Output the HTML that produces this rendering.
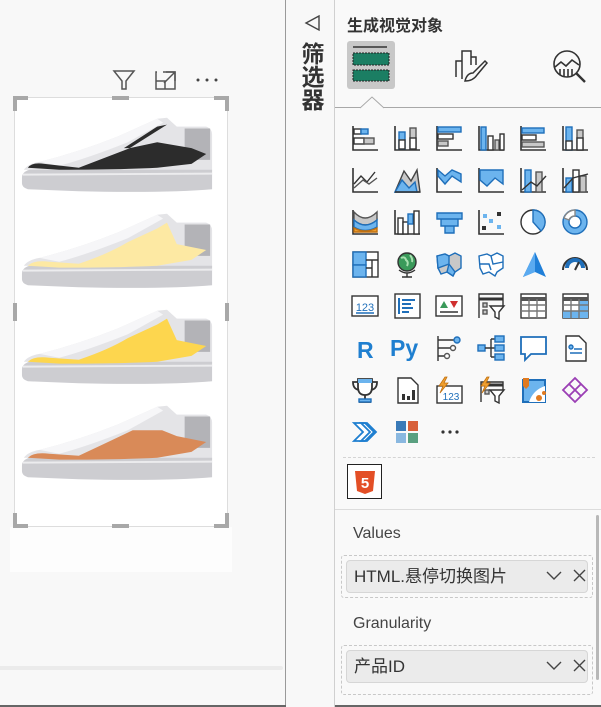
<!DOCTYPE html>
<html><head><meta charset="utf-8">
<style>
*{margin:0;padding:0;box-sizing:border-box}
body{width:601px;height:707px;overflow:hidden;background:#f8f8f8;font-family:"Liberation Sans","Noto Sans CJK SC",sans-serif;position:relative}
.a{position:absolute}
.fld{position:absolute;left:341px;width:252px;border:1px dashed #c8c8c8;border-radius:3px}
.pill{position:absolute;left:4px;right:4px;top:4px;height:33px;background:#ebebeb;border:1px solid #d6d6d6;border-radius:4px;font-size:17px;color:#333;line-height:31px;padding-left:7px}
.lbl{position:absolute;left:353px;font-size:16px;color:#444}
</style></head><body>
<div class="a" style="left:0;top:0;width:285px;height:707px;background:#f8f8f8"></div>
<div class="a" style="left:0;top:666px;width:283px;height:4px;background:#ebebeb;border-radius:0 2px 2px 0"></div>
<div class="a" style="left:285px;top:0;width:1px;height:707px;background:#9a9a9a"></div>
<div class="a" style="left:0;top:705px;width:601px;height:2px;background:#666"></div>
<svg class="a" style="left:110px;top:68px" width="110" height="24" viewBox="0 0 110 24">
<path d="M4 3H24L16 13V21H12V13Z" fill="none" stroke="#555" stroke-width="1.5"/>
<rect x="46" y="4" width="19" height="17" fill="none" stroke="#555" stroke-width="1.5"/>
<path d="M46 13H55V21" fill="none" stroke="#555" stroke-width="1.5"/>
<path d="M56 4h9v9M54 15L65 4" stroke="#555" stroke-width="1.5" fill="none"/>
<rect x="47" y="3" width="6" height="3" fill="#f8f8f8"/>
<circle cx="88" cy="12" r="1.5" fill="#444"/><circle cx="97" cy="12" r="1.5" fill="#444"/><circle cx="106" cy="12" r="1.5" fill="#444"/>
</svg>
<div class="a" style="left:14px;top:97px;width:214px;height:430px;background:#fff;border:1px solid #ddd"></div>
<div class="a" style="left:10px;top:527px;width:222px;height:45px;background:#fdfdfd"></div>
<svg class="a" style="left:12px;top:95px" width="218" height="434" viewBox="0 0 218 434">
<g fill="#a8a8a8">
<path d="M1 1h15v4H5v11H1z"/><path d="M217 1h-15v4h11v11h4z"/>
<path d="M1 433h15v-4H5v-11H1z"/><path d="M217 433h-15v-4h11v-11h4z"/>
<rect x="100" y="1" width="17" height="4"/><rect x="100" y="429" width="17" height="4"/>
<rect x="1" y="208" width="4" height="18"/><rect x="213" y="208" width="4" height="18"/>
</g></svg>
<svg width="0" height="0" class="a"><defs>
<g id="shoe">
<path d="M4 56 Q8 50 20 48 Q60 38 100 22 L140 4 L150 3 L160 12 L190 12 Q196 14 196 20 L196 58 Z" fill="#e4e4e7"/>
<path d="M20 48 Q60 38 100 22 L140 4 L146 8 L110 28 Q70 44 40 52Z" fill="#f6f6f8"/>
<path d="M168 14h26v32h-26z" fill="#b3b3b7"/>
<path d="M2 64 Q2 58 10 56 L196 56 L196 76 Q150 80 60 78 L8 76 Q2 74 2 70Z" fill="#cdcdd1"/>
<path d="M3 61 L196 60" stroke="#ececee" stroke-width="2"/>
</g></defs></svg>
<svg class="a" style="left:20px;top:114px" width="196" height="82" viewBox="0 0 200 82"><use href="#shoe"/>
<path d="M8 54 Q12 48 25 50 L60 54 L112 34 L140 28 L175 34 L190 40 L175 50 L140 54 Q100 56 40 56 Z" fill="#2c2c2c"/>
<path d="M140 12 L150 10 L112 34 L106 34 Z" fill="#2c2c2c"/></svg>
<svg class="a" style="left:20px;top:210px" width="196" height="82" viewBox="0 0 200 82"><use href="#shoe"/>
<path d="M8 56 Q14 50 30 52 L60 54 Q90 44 110 32 L140 18 L150 12 L160 34 L190 40 L175 50 L140 56 Q100 58 40 58 Z" fill="#fde9a3"/></svg>
<svg class="a" style="left:20px;top:306px" width="196" height="82" viewBox="0 0 200 82"><use href="#shoe"/>
<path d="M8 56 Q14 50 30 52 L60 54 Q90 44 110 32 L140 18 L150 12 L160 34 L190 40 L175 50 L140 56 Q100 58 40 58 Z" fill="#fdd64e"/></svg>
<svg class="a" style="left:20px;top:402px" width="196" height="82" viewBox="0 0 200 82"><use href="#shoe"/>
<path d="M8 56 Q14 50 30 52 L60 54 Q90 40 115 28 L145 28 L160 34 L190 40 L175 50 L140 56 Q100 58 40 58 Z" fill="#d98a58"/></svg>

<div class="a" style="left:286px;top:0;width:48px;height:707px;background:#f8f8f8"></div>
<svg class="a" style="left:303px;top:14px" width="18" height="20" viewBox="0 0 18 20"><path d="M16 2 L3 9 L16 16 Z" fill="none" stroke="#444" stroke-width="1.4"/></svg>
<div class="a" style="left:298px;top:42px;width:26px;font-size:23px;font-weight:bold;color:#333;line-height:26px;writing-mode:vertical-rl">筛选器</div>
<div class="a" style="left:334px;top:0;width:1px;height:707px;background:#d0d0d0"></div>
<div class="a" style="left:335px;top:0;width:266px;height:705px;background:#f9f9f9"></div>
<div class="a" style="left:347px;top:12px;font-size:16px;font-weight:bold;color:#333">生成视觉对象</div>
<div class="a" style="left:347px;top:41px;width:48px;height:48px;background:#c8c8c8;border-radius:3px"></div>
<svg class="a" style="left:347px;top:41px" width="48" height="48" viewBox="0 0 48 48">
<path d="M6 6H40" stroke="#333" stroke-width="1.4"/>
<rect x="6" y="12" width="36" height="12" fill="#1b7e63" stroke="#222" stroke-dasharray="2 1"/>
<rect x="6" y="29" width="36" height="11" fill="#1b7e63" stroke="#222" stroke-dasharray="2 1"/></svg>
<svg class="a" style="left:453px;top:47px" width="36" height="36" viewBox="0 0 36 36" fill="none" stroke="#333" stroke-width="1.5">
<path d="M3 30V14H9V32M9 22V4H18V18M18 10H23V18"/><path d="M12 34 Q14 26 20 26 L32 14 L34 16 L24 28 Q20 34 12 34Z"/></svg>
<svg class="a" style="left:550px;top:47px" width="38" height="38" viewBox="0 0 38 38" fill="none" stroke="#333" stroke-width="1.6">
<circle cx="17" cy="17" r="13"/><path d="M26 26L35 35" stroke-width="2.4"/><path d="M5 20 L11 15 L16 19 L22 13 L29 18"/><path d="M10 22V28M14 22V30M18 22V30M22 22V29"/></svg>
<div class="a" style="left:335px;top:107px;width:266px;height:1px;background:#a8a8a8"></div>
<svg class="a" style="left:360px;top:96px" width="24" height="13" viewBox="0 0 24 13"><path d="M0 12 L12 1 L24 12" fill="#f9f9f9" stroke="#a8a8a8"/></svg>

<svg class="a" style="left:345px;top:118px" width="250" height="330" viewBox="0 0 250 330" fill="none" stroke-width="1.4">
<defs>
<g id="ax"><path d="M2 2V26H27" stroke="#333" stroke-width="1.6"/></g>
</defs>
<g transform="translate(6,6)"><use href="#ax"/><rect x="3" y="5" width="7" height="5" fill="#fff" stroke="#333"/><rect x="10" y="5" width="7" height="5" fill="#6cb4ee" stroke="#1f6fba"/><rect x="3" y="14" width="10" height="6" fill="#fff" stroke="#333"/><rect x="13" y="14" width="10" height="6" fill="#c8c8c8" stroke="#555"/></g>
<g transform="translate(48,6)"><use href="#ax"/><rect x="6" y="8" width="6" height="17" fill="#6cb4ee" stroke="#1f6fba"/><rect x="6" y="16" width="6" height="9" fill="#fff" stroke="#333"/><rect x="17" y="4" width="6" height="21" fill="#c8c8c8" stroke="#555"/><rect x="17" y="14" width="6" height="11" fill="#fff" stroke="#333"/></g>
<g transform="translate(90,6)"><use href="#ax"/><rect x="3" y="3" width="23" height="5" fill="#6cb4ee" stroke="#1f6fba"/><rect x="3" y="10" width="15" height="5" fill="#fff" stroke="#333"/><rect x="3" y="17" width="10" height="5" fill="#c8c8c8" stroke="#555"/></g>
<g transform="translate(132,6)"><use href="#ax"/><rect x="4" y="3" width="5" height="23" fill="#6cb4ee" stroke="#1f6fba"/><rect x="11" y="12" width="5" height="14" fill="#fff" stroke="#333"/><rect x="18" y="16" width="4" height="10" fill="#c8c8c8" stroke="#555"/><rect x="23" y="10" width="4" height="16" fill="#fff" stroke="#333"/></g>
<g transform="translate(174,6)"><use href="#ax"/><rect x="3" y="4" width="22" height="5" fill="#6cb4ee" stroke="#1f6fba"/><rect x="3" y="11" width="14" height="5" fill="#fff" stroke="#333"/><rect x="3" y="18" width="22" height="5" fill="#c8c8c8" stroke="#555"/></g>
<g transform="translate(216,6)"><use href="#ax"/><rect x="5" y="3" width="6" height="23" fill="#6cb4ee" stroke="#1f6fba"/><rect x="5" y="17" width="6" height="9" fill="#fff" stroke="#333"/><rect x="16" y="6" width="6" height="20" fill="#c8c8c8" stroke="#555"/><rect x="16" y="14" width="6" height="12" fill="#fff" stroke="#333"/></g>
<g transform="translate(6,48)"><use href="#ax"/><path d="M3 18 L10 10 L16 16 L24 6" stroke="#333"/><path d="M3 22 L12 14 L18 18 L26 12" stroke="#555"/></g>
<g transform="translate(48,48)"><path d="M2 26 L11 5 L18 15 L24 4 L27 26 Z" fill="#c8c8c8" stroke="#444"/><path d="M2 26 L9 14 L16 22 L22 16 L24 26 Z" fill="#6cb4ee" stroke="#1f6fba"/><path d="M2 26H27" stroke="#333" stroke-width="1.6"/></g>
<g transform="translate(90,48)"><use href="#ax"/><path d="M3 10 L10 18 L17 10 L26 16 L26 8 L17 4 L10 10 L3 4Z" fill="#6cb4ee" stroke="#1f6fba"/></g>
<g transform="translate(132,48)"><use href="#ax"/><path d="M3 4 L26 4 L26 18 L18 12 L10 20 L3 14Z" fill="#6cb4ee" stroke="#1f6fba"/></g>
<g transform="translate(174,48)"><use href="#ax"/><rect x="6" y="4" width="6" height="22" fill="#6cb4ee" stroke="#1f6fba"/><rect x="17" y="6" width="6" height="20" fill="#c8c8c8" stroke="#555"/><path d="M3 24 L12 16 L18 20 L27 10" stroke="#333"/></g>
<g transform="translate(216,48)"><use href="#ax"/><rect x="5" y="12" width="6" height="14" fill="#6cb4ee" stroke="#1f6fba"/><rect x="12" y="4" width="6" height="22" fill="#fff" stroke="#333"/><rect x="19" y="10" width="6" height="16" fill="#c8c8c8" stroke="#555"/><path d="M3 22 L12 12 L27 8" stroke="#333"/></g>
<g transform="translate(6,90)"><use href="#ax"/><path d="M3 4 Q14 16 26 4 L26 12 Q14 22 3 12Z" fill="#c8c8c8" stroke="#555"/><path d="M3 12 Q14 22 26 12 L26 19 Q14 26 3 19Z" fill="#6cb4ee" stroke="#1f6fba"/><path d="M3 20 Q14 26 26 20 L26 24 L3 24Z" fill="#f0a030" stroke="#c07010"/></g>
<g transform="translate(48,90)"><use href="#ax"/><rect x="5" y="10" width="5" height="16" fill="#fff" stroke="#333"/><rect x="10" y="14" width="5" height="12" fill="#fff" stroke="#333"/><rect x="15" y="6" width="5" height="10" fill="#6cb4ee" stroke="#1f6fba"/><rect x="21" y="3" width="5" height="23" fill="#fff" stroke="#333"/></g>
<g transform="translate(90,90)"><path d="M2 5H27V11H2Z M6 11H23V18H6Z M10 18H19V25H10Z" fill="#6cb4ee" stroke="#1f6fba"/></g>
<g transform="translate(132,90)"><use href="#ax"/><rect x="6" y="6" width="4" height="4" fill="#6cb4ee" stroke="none"/><rect x="12" y="11" width="4" height="4" fill="#6cb4ee" stroke="none"/><rect x="20" y="4" width="4" height="4" fill="#333" stroke="none"/><rect x="5" y="18" width="4" height="4" fill="#333" stroke="none"/><rect x="20" y="17" width="4" height="4" fill="#6cb4ee" stroke="none"/></g>
<g transform="translate(174,90)"><circle cx="14" cy="14" r="12" fill="#fff" stroke="#333"/><path d="M14 2 A12 12 0 0 1 22 23 L14 14Z" fill="#6cb4ee" stroke="#1f6fba"/></g>
<g transform="translate(216,90)"><circle cx="14" cy="14" r="12" fill="#6cb4ee" stroke="#1f6fba"/><circle cx="14" cy="14" r="6" fill="#fff" stroke="#1f6fba"/><path d="M14 2 A12 12 0 0 0 3 10 L8 12 A6 6 0 0 1 14 8Z" fill="#fff" stroke="#888"/></g>
<g transform="translate(6,132)"><rect x="2" y="2" width="25" height="25" fill="#fff" stroke="#333"/><rect x="2" y="2" width="13" height="13" fill="#6cb4ee" stroke="#1f6fba"/><rect x="2" y="15" width="13" height="12" fill="#6cb4ee" stroke="#1f6fba"/><path d="M15 10H27M21 10V27M15 18H21" stroke="#333"/></g>
<g transform="translate(48,132)"><circle cx="14" cy="12" r="9" fill="#3a9a5a" stroke="#333"/><path d="M8 8 Q12 6 13 10 Q16 12 14 16 M17 5 Q20 9 19 12" stroke="#a8e0b0" stroke-width="2"/><path d="M6 20 Q14 26 22 20 M14 23V27M9 27H19" stroke="#333"/></g>
<g transform="translate(90,132)"><path d="M2 6 L10 4 L14 6 L20 3 L26 6 L26 18 L20 22 L18 26 L12 22 L6 24 L3 18Z" fill="#c8c8c8" stroke="#1f6fba"/><path d="M2 6 L10 4 L14 6 L14 14 L3 18Z M14 14 L20 22 L18 26 L12 22Z" fill="#6cb4ee" stroke="#1f6fba"/></g>
<g transform="translate(132,132)"><path d="M2 6 L10 4 L14 6 L20 3 L26 6 L26 18 L20 22 L18 26 L12 22 L6 24 L3 18Z" fill="#fff" stroke="#1f6fba"/><path d="M2 14 L12 14 L14 20 M14 6 L16 14 L26 12" stroke="#1f6fba"/></g>
<g transform="translate(174,132)"><path d="M16 2 L27 27 L16 22 L4 27Z" fill="#1f7fd8" stroke="none"/><path d="M16 2 L16 22 L4 27Z" fill="#5aaaf0"/></g>
<g transform="translate(216,132)"><path d="M2 20 A12 12 0 0 1 26 20" stroke="#333" stroke-width="2"/><path d="M6 18 A8 8 0 0 1 22 18" stroke="#1f6fba" stroke-width="4"/><path d="M14 20 L18 12" stroke="#333" stroke-width="2"/></g>
<g transform="translate(6,174)"><rect x="1" y="4" width="26" height="20" fill="#fff" stroke="#333"/><text x="14" y="19" font-size="11" fill="#1f6fba" text-anchor="middle" stroke="none" font-family="Liberation Sans">123</text><path d="M5 21H23" stroke="#1f6fba"/></g>
<g transform="translate(48,174)"><rect x="2" y="2" width="25" height="24" fill="#fff" stroke="#333"/><path d="M6 6V22M9 8H22M9 12H18M9 16H20M9 20H16" stroke="#1f6fba" stroke-width="2"/></g>
<g transform="translate(90,174)"><rect x="1" y="4" width="26" height="20" fill="#fff" stroke="#333"/><path d="M5 16 L9 9 L13 16Z" fill="#3a9a5a" stroke="none"/><path d="M15 9 L23 9 L19 16Z" fill="#d03030" stroke="none"/><path d="M5 20H23" stroke="#333"/></g>
<g transform="translate(132,174)"><path d="M2 26V2H26V14" stroke="#333"/><path d="M2 7H26" stroke="#333" stroke-width="3"/><rect x="6" y="11" width="4" height="4" fill="#c8c8c8" stroke="#555"/><rect x="6" y="18" width="4" height="4" fill="#c8c8c8" stroke="#555"/><path d="M13 14H27L22 20V27L18 25V20Z" fill="#fff" stroke="#333"/></g>
<g transform="translate(174,174)"><rect x="2" y="2" width="25" height="24" fill="#fff" stroke="#333"/><path d="M2 7H27" stroke="#555" stroke-width="4"/><path d="M2 13H27M2 19H27M10 7V26M18 7V26" stroke="#777"/></g>
<g transform="translate(216,174)"><rect x="2" y="2" width="25" height="24" fill="#fff" stroke="#333"/><path d="M2 7H27" stroke="#555" stroke-width="4"/><rect x="18" y="9" width="9" height="17" fill="#6cb4ee" stroke="none"/><rect x="2" y="19" width="25" height="7" fill="#6cb4ee" stroke="none"/><path d="M2 13H27M2 19H27M10 7V26M18 7V26" stroke="#777"/></g>
<text x="12" y="240" font-size="23" font-weight="bold" fill="#1f7fd0" stroke="none" font-family="Liberation Sans">R</text>
<text x="45" y="238" font-size="23" font-weight="bold" fill="#1f7fd0" stroke="none" font-family="Liberation Sans">Py</text>
<g transform="translate(90,216)"><path d="M3 2V27M3 6H20M3 14H16M3 22H10" stroke="#333"/><circle cx="22" cy="6" r="3" fill="#6cb4ee" stroke="#1f6fba"/><circle cx="18" cy="14" r="2.5" fill="#fff" stroke="#555"/><circle cx="12" cy="22" r="2.5" fill="#fff" stroke="#555"/></g>
<g transform="translate(132,216)"><rect x="1" y="11" width="7" height="6" fill="#6cb4ee" stroke="#1f6fba"/><path d="M8 14H14M14 5V23M14 5H18M14 14H18M14 23H18" stroke="#333"/><rect x="18" y="2" width="9" height="6" fill="#6cb4ee" stroke="#1f6fba"/><rect x="18" y="11" width="9" height="6" fill="#6cb4ee" stroke="#1f6fba"/><rect x="18" y="20" width="9" height="6" fill="#6cb4ee" stroke="#1f6fba"/></g>
<g transform="translate(174,216)"><path d="M2 3H27V20H12L6 26V20H2Z" fill="#fff" stroke="#1f6fba" stroke-width="1.8"/></g>
<g transform="translate(216,216)"><path d="M5 2H18L25 9V27H5Z" fill="#fff" stroke="#333"/><circle cx="10" cy="13" r="2" fill="#6cb4ee" stroke="#1f6fba"/><path d="M13 15H21M9 19H21" stroke="#1f6fba"/></g>
<g transform="translate(6,258)"><path d="M7 3H21V11Q21 19 14 19Q7 19 7 11Z" fill="#fff" stroke="#333" stroke-width="1.8"/><path d="M7 6H2Q2 13 8 14M21 6H26Q26 13 20 14M14 19V23M8 26H20" stroke="#333" stroke-width="1.8"/><rect x="8" y="23" width="12" height="3" fill="#6cb4ee" stroke="#1f6fba"/><rect x="7" y="3" width="14" height="4" fill="#6cb4ee" stroke="none"/></g>
<g transform="translate(48,258)"><path d="M5 2H18L25 9V27H5Z" fill="#fff" stroke="#333"/><rect x="9" y="18" width="3" height="6" fill="#333" stroke="none"/><rect x="14" y="20" width="3" height="4" fill="#333" stroke="none"/><rect x="19" y="14" width="3" height="10" fill="#333" stroke="none"/></g>
<g transform="translate(90,258)"><rect x="2" y="10" width="25" height="17" fill="#fff" stroke="#333"/><text x="16" y="24" font-size="10" fill="#1f6fba" text-anchor="middle" stroke="none" font-family="Liberation Sans">123</text><path d="M10 1 L4 10 L8 10 L5 17 L13 7 L9 7 L12 1Z" fill="#f0a030" stroke="#c07010" stroke-width="0.8"/></g>
<g transform="translate(132,258)"><path d="M4 26V6H26V14" stroke="#333"/><path d="M4 9H26" stroke="#333" stroke-width="3"/><rect x="8" y="14" width="4" height="4" fill="#c8c8c8" stroke="#555"/><path d="M13 14H27L22 20V27L18 25V20Z" fill="#fff" stroke="#333"/><path d="M10 1 L4 10 L8 10 L5 17 L13 7 L9 7 L12 1Z" fill="#f0a030" stroke="#c07010" stroke-width="0.8"/></g>
<g transform="translate(174,258)"><rect x="4" y="4" width="22" height="22" fill="#6cb4ee" stroke="#1f6fba" stroke-width="2"/><path d="M10 26 Q14 14 26 10 L26 26Z" fill="#fff" stroke="none"/><path d="M4 2H10V10L7 13L4 10Z" fill="#e07a20" stroke="none"/><circle cx="20" cy="22" r="3" fill="#e07a20" stroke="none"/><circle cx="25" cy="17" r="2" fill="#e07a20" stroke="none"/></g>
<g transform="translate(216,258)"><path d="M14 2 L26 14 L14 26 L2 14Z M8 8 L20 20 M20 8 L8 20" stroke="#9b3fb5" stroke-width="1.8"/></g>
<g transform="translate(6,300)"><path d="M3 5H14L23 14L14 23H3L12 14Z" fill="#fff" stroke="#1f7fd0" stroke-width="1.8"/><path d="M10 5H16L25 14L16 23H10L19 14Z" fill="none" stroke="#1f7fd0" stroke-width="1.8"/></g>
<g transform="translate(48,300)"><rect x="3" y="3" width="10" height="10" fill="#3a7ab8" stroke="none"/><rect x="15" y="3" width="10" height="10" fill="#d8603a" stroke="none"/><rect x="3" y="15" width="10" height="10" fill="#8ab8e0" stroke="none"/><rect x="15" y="15" width="10" height="10" fill="#5aa080" stroke="none"/></g>
<g fill="#333" stroke="none"><circle cx="98" cy="314" r="1.6"/><circle cx="105" cy="314" r="1.6"/><circle cx="112" cy="314" r="1.6"/></g>
</svg>
<div class="a" style="left:343px;top:457px;width:252px;border-top:1px dashed #d4d4d4"></div>
<div class="a" style="left:347px;top:464px;width:35px;height:35px;border:1px solid #222;background:#fff"></div>
<svg class="a" style="left:352px;top:469px" width="26" height="26" viewBox="0 0 26 26"><path d="M3 2H23L21 22L13 25L5 22Z" fill="#e34f26"/><text x="13" y="19" font-size="15" font-weight="bold" fill="#fff" text-anchor="middle" font-family="Liberation Sans">5</text></svg>
<div class="a" style="left:335px;top:509px;width:266px;height:1px;background:#dcdcdc"></div>
<div class="a" style="left:596px;top:515px;width:3px;height:165px;background:#b8b8b8;border-radius:2px"></div>
<div class="lbl" style="top:525px">Values</div>
<div class="fld" style="top:555px;height:43px"><div class="pill">HTML.悬停切换图片</div></div>
<div class="lbl" style="top:615px">Granularity</div>
<div class="fld" style="top:645px;height:50px"><div class="pill">产品ID</div></div>
<svg class="a" style="left:545px;top:568px" width="45" height="16" viewBox="0 0 45 16" fill="none" stroke="#444" stroke-width="1.4"><path d="M2 4L9 11L16 4M29 2L40 13M40 2L29 13"/></svg>
<svg class="a" style="left:545px;top:658px" width="45" height="16" viewBox="0 0 45 16" fill="none" stroke="#444" stroke-width="1.4"><path d="M2 4L9 11L16 4M29 2L40 13M40 2L29 13"/></svg>
</body></html>
